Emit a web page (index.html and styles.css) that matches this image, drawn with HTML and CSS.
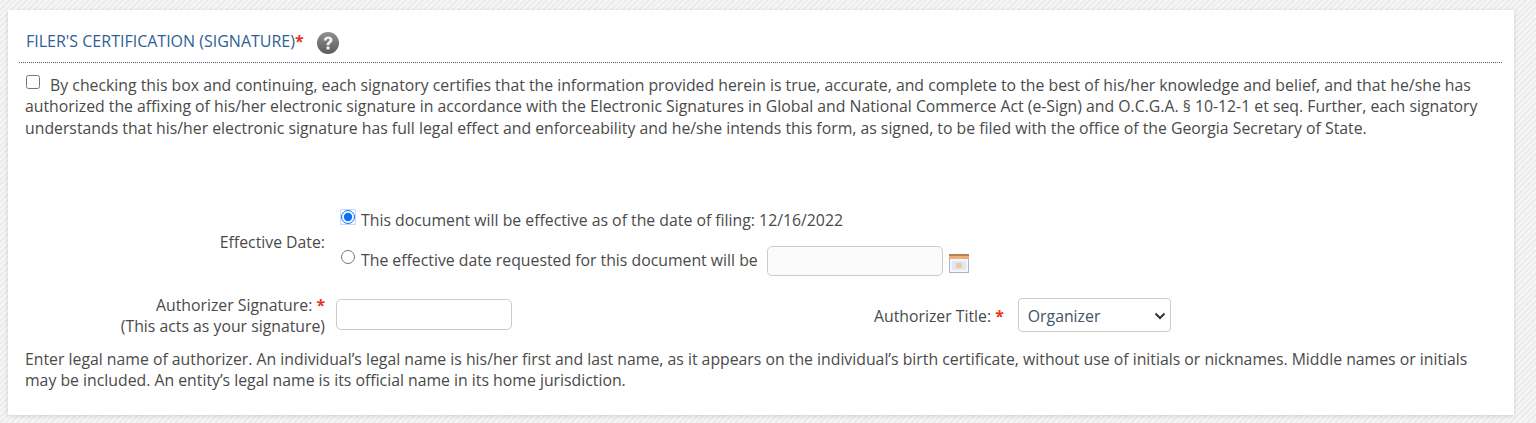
FILE: index.html
```html
<!DOCTYPE html>
<html lang="en">
<head>
  <meta charset="utf-8">
  <title>Filer's Certification</title>
  <link rel="stylesheet" href="styles.css">
</head>
<body>
  <div class="card">
    <h3 class="section-title">
      <span>FILER'S CERTIFICATION (SIGNATURE)<span class="req">*</span></span>
      <svg class="help" width="22" height="22" viewBox="0 0 22 22">
        <defs>
          <linearGradient id="helpFill" x1="0" y1="0" x2="0" y2="1">
            <stop offset="0" stop-color="#8f8f8f"/>
            <stop offset="1" stop-color="#5c5c5c"/>
          </linearGradient>
        </defs>
        <circle cx="11" cy="11" r="11" fill="url(#helpFill)"/>
        <path d="M6.800 8.400c.2-2.500 2-3.900 4.500-3.900 2.500 0 4.200 1.400 4.200 3.500 0 1.700-1 2.400-2 3.200-.8.600-1.100 1-1.100 2H9.600c0-1.800.5-2.600 1.500-3.300.8-.6 1.400-1.100 1.400-1.800 0-.8-.5-1.300-1.300-1.300-.9 0-1.400.6-1.500 1.600z" fill="#f4f4f4"/>
        <rect x="9.600" y="14.600" width="2.900" height="2.900" rx=".6" fill="#f4f4f4"/>
      </svg>
    </h3>
    <p class="certify">
      <input type="checkbox" class="certify-check">
      By checking this box and continuing, each signatory certifies that the information provided herein is true, accurate, and complete to the best of his/her knowledge and belief, and that he/she has authorized the affixing of his/her electronic signature in accordance with the Electronic Signatures in Global and National Commerce Act (e-Sign) and O.C.G.A. § 10-12-1 et seq. Further, each signatory understands that his/her electronic signature has full legal effect and enforceability and he/she intends this form, as signed, to be filed with the office of the Georgia Secretary of State.
    </p>

    <div class="date-row">
      <label class="field-label date-label">Effective Date:</label>
      <div class="date-options">
        <label class="date-option">
          <input type="radio" name="effective" checked>
          This document will be effective as of the date of filing: 12/16/2022
        </label>
        <label class="date-option">
          <input type="radio" name="effective">
          The effective date requested for this document will be
          <input type="text" class="date-input" disabled>
          <svg class="calendar" width="20" height="19" viewBox="0 0 20 19">
            <rect x=".5" y=".5" width="19" height="18" fill="#f3f6fb" stroke="#a9b4c6"/>
            <rect x="0" y="0" width="20" height="2" fill="#b5814e"/>
            <rect x="0" y="2" width="20" height="3" fill="#eeb078"/>
            <rect x="3" y="7" width="14" height="9" fill="#dfe8f4"/>
            <rect x="7" y="9" width="6" height="5" fill="#efc9a6"/>
          </svg>
        </label>
      </div>
    </div>

    <div class="signature-row">
      <label class="field-label signature-label">
        Authorizer Signature: <span class="req">*</span><br>
        (This acts as your signature)
      </label>
      <input type="text" class="signature-input">
      <label class="title-label">Authorizer Title: <span class="req">*</span></label>
      <div class="select-wrap">
        <select class="title-select">
          <option>Organizer</option>
        </select>
        <svg class="select-arrow" width="12" height="8" viewBox="0 0 12 8">
          <path d="M1.500 1.500 6 6l4.500-4.500" fill="none" stroke="#333" stroke-width="2"/>
        </svg>
      </div>
    </div>

    <p class="legal-note">Enter legal name of authorizer. An individual’s legal name is his/her first and last name, as it appears on the individual’s birth certificate, without use of initials or nicknames. Middle names or initials may be included. An entity’s legal name is its official name in its home jurisdiction.</p>
  </div>
</body>
</html>
```

FILE: styles.css
```css
html, body {
  height: 100%;
}
body {
  margin: 0;
  padding: 10px 22px 0 8px;
  box-sizing: border-box;
  overflow: hidden;
  font-family: "Open Sans", "Noto Sans", sans-serif;
  font-size: 15.8px;
  color: #4a4a4a;
  background-color: #f1f1f1;
  background-image: repeating-linear-gradient(135deg, #f6f6f6 0, #f6f6f6 2px, #ececec 2px, #ececec 4px);
}
.card {
  height: 405px;
  box-sizing: border-box;
  padding: 21px 12px 0 11px;
  background-color: #fff;
  box-shadow: 0 1px 4px rgba(0, 0, 0, 0.15);
}
.section-title {
  display: flex;
  align-items: center;
  gap: 13px;
  height: 32px;
  box-sizing: border-box;
  margin: 0;
  padding: 0 0 11px 7px;
  border-bottom: 1px dotted #44607a;
  font-size: 16px;
  font-weight: normal;
  color: #2f6096;
}
.req {
  color: #e8331c;
  font-weight: bold;
}
.help {
  margin-top: 3px;
}
.certify, .legal-note {
  margin: 0;
  padding-left: 6px;
  line-height: 21.33px;
}
.certify {
  margin-top: 12px;
}
.certify-check {
  width: 14px;
  height: 14px;
  margin: 0 6px 0 1px;
  vertical-align: 2px;
}
.date-row {
  display: flex;
  align-items: center;
  margin-top: 65px;
}
.field-label {
  width: 306px;
  flex-shrink: 0;
  text-align: right;
  line-height: 21px;
}
.date-label {
  padding-top: 5px;
}
.signature-label {
  padding-top: 2px;
}
.date-options {
  display: flex;
  flex-direction: column;
  gap: 8px;
  margin-left: 16px;
}
.date-option {
  display: flex;
  align-items: center;
  gap: 6px;
  min-height: 32px;
}
.date-option input[type="radio"] {
  width: 14px;
  height: 14px;
  margin: 0 0 5px;
  accent-color: #0d6efd;
}
.date-option input[type="radio"]:checked {
  box-shadow: 0 0 0 1px rgba(13, 110, 253, 0.25);
  border-radius: 50%;
}
.date-input {
  width: 176px;
  height: 30px;
  box-sizing: border-box;
  margin: 2px 0 0 3px;
  border: 1px solid #ccc;
  border-radius: 5px;
  background-color: #fbfbfb;
}
.calendar {
  margin: 8px 0 0 0;
}
.signature-row {
  display: flex;
  align-items: center;
  margin-top: 17px;
}
.signature-input {
  width: 176px;
  height: 31px;
  box-sizing: border-box;
  margin-left: 11px;
  border: 1px solid #ccc;
  border-radius: 5px;
}
.title-label {
  margin-left: 362px;
  padding-top: 2px;
}
.select-wrap {
  position: relative;
  margin-left: 14px;
}
.title-select {
  display: block;
  width: 153px;
  height: 34px;
  padding: 2px 0 0 9px;
  border: 1px solid #ccc;
  border-radius: 4px;
  background-color: #fff;
  font-family: inherit;
  font-size: 15.8px;
  color: #44546a;
  appearance: none;
}
.select-arrow {
  position: absolute;
  top: 14px;
  right: 5px;
  pointer-events: none;
}
.legal-note {
  margin-top: 12px;
}
```
